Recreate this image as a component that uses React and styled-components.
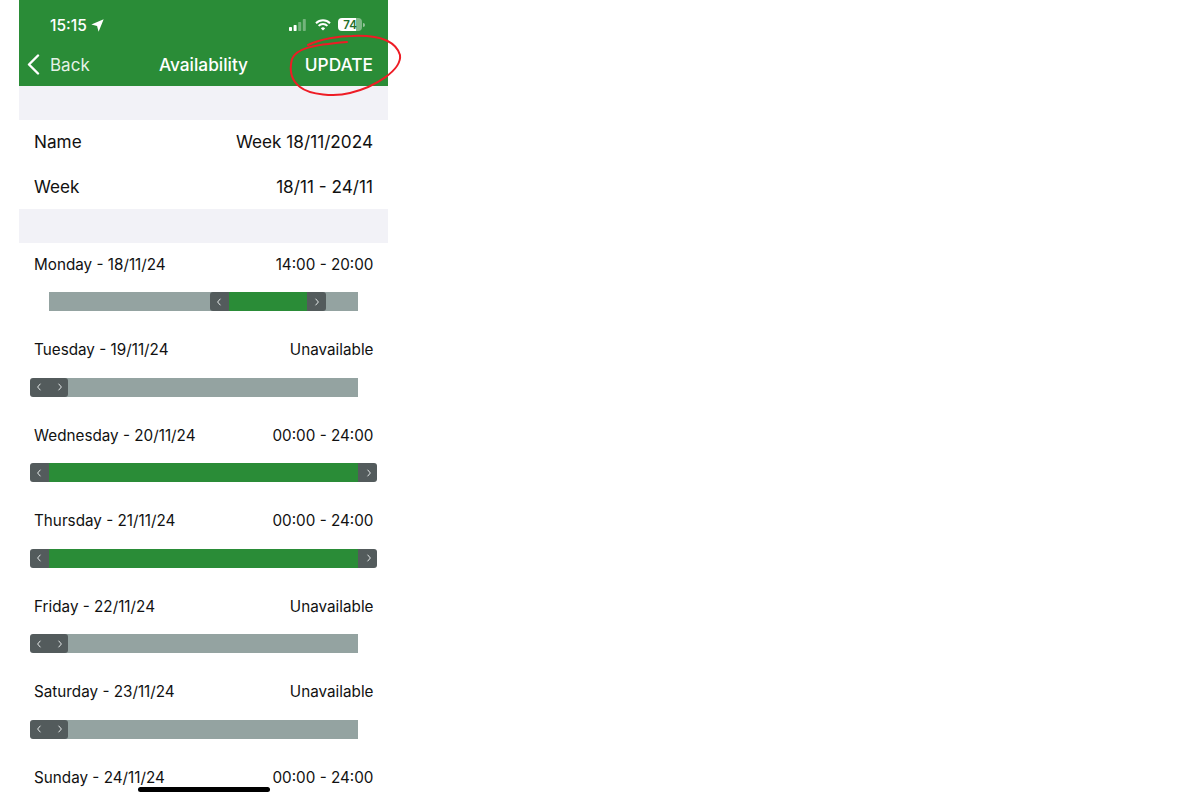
import React from "react";
import styled, { createGlobalStyle } from "styled-components";

const Global = createGlobalStyle`
  html, body { margin: 0; padding: 0; background: #fff; }
  body { font-family: Inter, "Liberation Sans", sans-serif; color: #111; overflow: hidden; }
`;
const Page = styled.div`
  width: 1200px; height: 800px; overflow: hidden; padding-left: 19px; box-sizing: border-box; position: relative;
`;
const Phone = styled.div`
  width: 369px; height: 800px; position: relative; background: #fff;
`;
const Header = styled.header`
  height: 86px; background: #2a8c37; color: #fff; box-sizing: border-box; display: flex; flex-direction: column;
`;
const Status = styled.div`
  height: 44px; display: flex; align-items: center; justify-content: space-between; padding: 5px 26px 0 31px; box-sizing: border-box;
`;
const Time = styled.div`
  font-size: 15.5px; font-weight: 500; display: flex; align-items: center; gap: 4px; padding-top: 2px;
`;
const StatusIcons = styled.div`
  display: flex; align-items: center; gap: 7px;
`;
const Battery = styled.div`
  width: 24px; height: 13px; border-radius: 4px; font-size: 11.5px; font-weight: 600; color: #1f6e2b; display: flex; align-items: center; justify-content: center;
  background: linear-gradient(to right, #fff 74%, rgba(255,255,255,.4) 74%); position: relative;
  &::after { content: ""; position: absolute; right: -3px; top: 4.5px; width: 2px; height: 4px; background: rgba(255,255,255,.5); border-radius: 0 2px 2px 0; }
`;
const Nav = styled.div`
  flex: 1; display: grid; grid-template-columns: 1fr auto 1fr; align-items: center; padding: 0 15px 0 7px;
  margin-top: -1px;
`;
const Back = styled.div`
  display: flex; align-items: center; gap: 9px; font-size: 17px; font-weight: 400; color: rgba(255,255,255,.9);
`;
const Title = styled.div`
  font-size: 17.3px; font-weight: 500; transform: translateX(4px);
`;
const Update = styled.div`
  justify-self: end; font-size: 17.3px; font-weight: 500; white-space: nowrap;
`;
const Band = styled.div`
  height: 34px; background: #f2f2f7;
`;
const InfoRow = styled.div`
  height: ${p => p.$h}px; display: flex; align-items: center; justify-content: space-between; padding: 0 15px ${p => p.$pb || 0}px; font-size: 17.2px; box-sizing: border-box;
`;
const Day = styled.div`
  height: 85.6px; box-sizing: border-box; padding-top: 11.5px;
`;
const DayHead = styled.div`
  display: flex; justify-content: space-between; padding: 0 14.5px 0 15px; font-size: 15.25px; line-height: 20px; color: #111;
`;
const Track = styled.div`
  position: relative; height: 19px; margin: 17.5px 30px 0; background: #94a3a1;
`;
const Fill = styled.div`
  position: absolute; top: 0; bottom: 0; background: #2a8c37;
`;
const Handle = styled.div`
  position: absolute; top: 0; width: 19px; height: 19px; background: #535b5c; display: flex; align-items: center;
  justify-content: center; box-sizing: border-box;
  padding: ${p => (p.$side === "l" ? "0 2px 0 0" : "0 0 0 2px")};
  border-radius: ${p => (p.$side === "l" ? "3px 0 0 3px" : "0 3px 3px 0")};
`;
const Ring = styled.svg`
  position: absolute; left: 290px; top: 35px; width: 111px; height: 62px; overflow: visible; pointer-events: none;
`;
const Home = styled.div`
  position: absolute; left: 119px; top: 787px; width: 132px; height: 5px; border-radius: 3px; background: #000;
`;

const Chev = ({ dir }) => (
  <svg width="6" height="8" viewBox="0 0 6 8" fill="none" stroke="#e4e8e8" strokeWidth="1" strokeLinecap="round" strokeLinejoin="round">
    <path d={dir === "l" ? "M4.2 1 1.6 4l2.6 3" : "M1.8 1l2.6 3-2.6 3"} />
  </svg>
);

const FULL = 309;
const days = [
  { n: "Monday - 18/11/24", v: "14:00 - 20:00", a: 14, b: 20 },
  { n: "Tuesday - 19/11/24", v: "Unavailable", a: 0, b: 0 },
  { n: "Wednesday - 20/11/24", v: "00:00 - 24:00", a: 0, b: 24 },
  { n: "Thursday - 21/11/24", v: "00:00 - 24:00", a: 0, b: 24 },
  { n: "Friday - 22/11/24", v: "Unavailable", a: 0, b: 0 },
  { n: "Saturday - 23/11/24", v: "Unavailable", a: 0, b: 0 },
  { n: "Sunday - 24/11/24", v: "00:00 - 24:00", a: 0, b: 24, hideTrack: true },
];

export default function App() {
  return (
    <Page>
      <Global />
      <Phone>
        <Header>
          <Status>
            <Time>
              15:15
              <svg width="13" height="13" viewBox="0 0 12 12" fill="#fff"><path d="M11.7.3 7 11.7 5.6 6.4.3 5z" /></svg>
            </Time>
            <StatusIcons>
              <svg width="19" height="12" viewBox="0 0 19 12" fill="#fff">
                <rect x="0" y="8" width="3" height="4" rx=".7" />
                <rect x="4.6" y="6" width="3" height="6" rx=".7" />
                <rect x="9.2" y="3" width="3" height="9" rx=".7" opacity=".35" />
                <rect x="13.8" y="0" width="3" height="12" rx=".7" opacity=".35" />
              </svg>
              <svg width="16" height="12" viewBox="0 0 16 12" fill="none" stroke="#fff" strokeWidth="2">
                <path d="M1 4.2a10 10 0 0 1 14 0" />
                <path d="M3.6 6.9a6.3 6.3 0 0 1 8.8 0" />
                <path d="M8 11.6 5.9 9.4a3 3 0 0 1 4.2 0z" fill="#fff" stroke="none" />
              </svg>
              <Battery>74</Battery>
            </StatusIcons>
          </Status>
          <Nav>
            <Back>
              <svg width="15" height="21" viewBox="0 0 15 21" fill="none" stroke="#fff" strokeWidth="2.4" strokeLinecap="round" strokeLinejoin="round">
                <path d="M12 1.5 3 10.5l9 9" />
              </svg>
              Back
            </Back>
            <Title>Availability</Title>
            <Update>UPDATE</Update>
          </Nav>
        </Header>
        <Band />
        <InfoRow $h={44} $pb={2}><span>Name</span><span>Week 18/11/2024</span></InfoRow>
        <InfoRow $h={45}><span>Week</span><span>18/11 - 24/11</span></InfoRow>
        <Band />
        {days.map(d => {
          const x1 = (d.a / 24) * FULL;
          const x2 = (d.b / 24) * FULL;
          return (
            <Day key={d.n}>
              <DayHead><span>{d.n}</span><span>{d.v}</span></DayHead>
              {!d.hideTrack && (
                <Track>
                  <Fill style={{ left: x1, width: x2 - x1 }} />
                  <Handle $side="l" style={{ left: x1 - 19 }}><Chev dir="l" /></Handle>
                  <Handle $side="r" style={{ left: x2 }}><Chev dir="r" /></Handle>
                </Track>
              )}
            </Day>
          );
        })}
        <Home />
      </Phone>
      <Ring viewBox="0 0 111 62" fill="none" stroke="#ee1c25" strokeLinecap="round" strokeWidth="2">
        <path d="M18 10C30 4 50 1 62 1c23-1 43 3 48 19 2 15-25 32-50 38-15 4-40 2-50-6C2 46-1 36 2 24 6 14 20 10 57 7" />
      </Ring>
    </Page>
  );
}
